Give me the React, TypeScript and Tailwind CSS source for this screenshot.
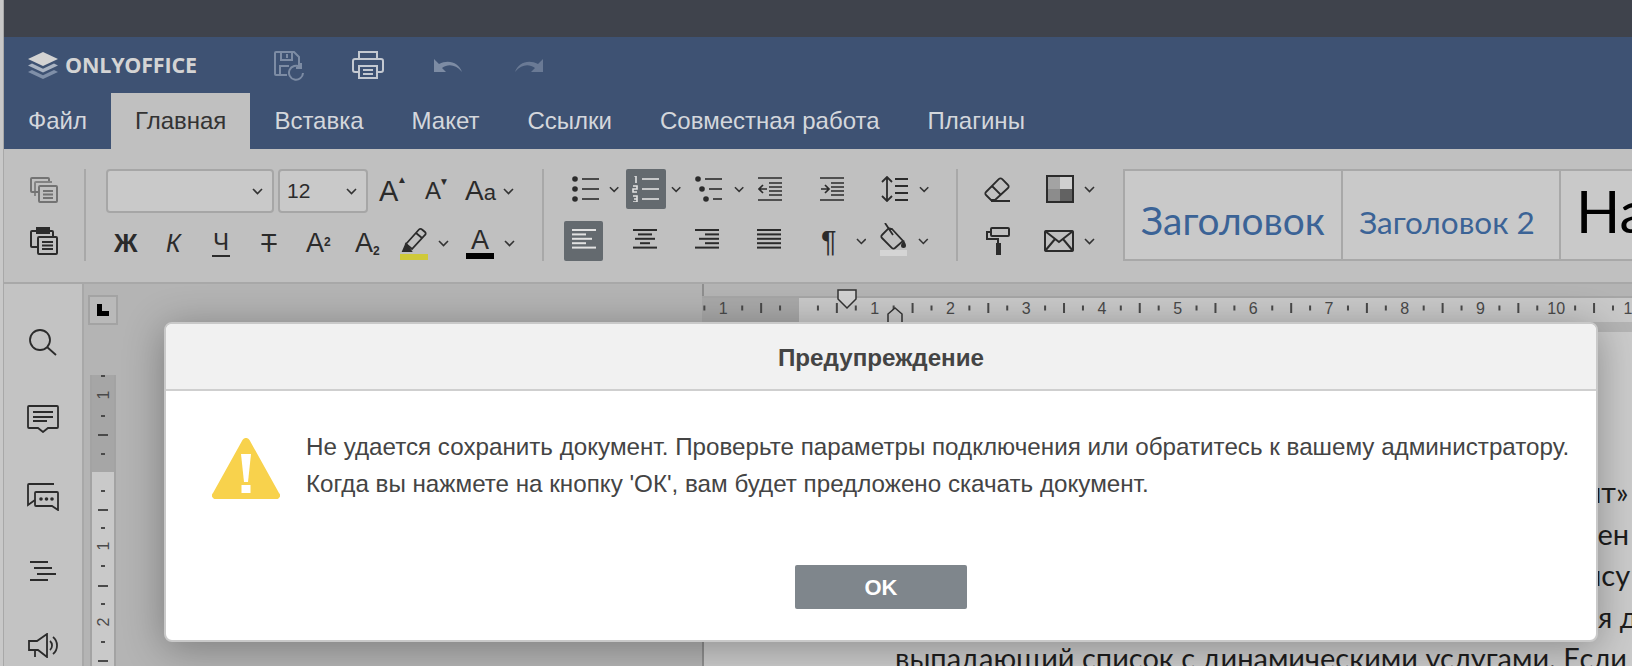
import { FC, ReactNode } from 'react';

const ink = '#2b2b2b';

const Chevron: FC<{ className?: string }> = ({ className }) => (
  <svg className={className} width="11" height="7" viewBox="0 0 11 7" fill="none" stroke="#333" strokeWidth="1.6">
    <path d="M1 1l4.5 4.5L10 1" />
  </svg>
);

const Logo = () => (
  <svg width="30" height="27" viewBox="0 0 30 27">
    <path d="M15 0l15 7-15 7L0 7z" fill="#d3d3d3" />
    <path d="M0 13.5l4-2 11 5.2 11-5.2 4 2-15 7z" fill="#aab4c3" />
    <path d="M0 20l4-2 11 5.2L26 18l4 2-15 7z" fill="#7f8fa8" />
  </svg>
);

const SaveIcon = () => (
  <svg width="31" height="30" viewBox="0 0 31 30" fill="none" stroke="#7d8ca4" strokeWidth="2">
    <path d="M13 24H2a1 1 0 0 1-1-1V2a1 1 0 0 1 1-1h18l5 5v9" />
    <path d="M7 1v8h11V1M13 3v4M6 24v-9h9" />
    <path d="M29 22a7 7 0 1 1-3-6" />
    <path d="M27 12v5h-5" />
  </svg>
);

const PrintIcon = () => (
  <svg width="32" height="28" viewBox="0 0 32 28" fill="none" stroke="#c4c9d1" strokeWidth="2">
    <path d="M7 8V1h18v7" />
    <path d="M7 21H3a2 2 0 0 1-2-2V10a2 2 0 0 1 2-2h26a2 2 0 0 1 2 2v9a2 2 0 0 1-2 2h-4" />
    <path d="M7 15h18v12H7zM11 19h10M11 23h10" />
  </svg>
);

const UndoIcon: FC<{ flip?: boolean }> = ({ flip }) => (
  <svg className={flip ? '-scale-x-100' : ''} width="29" height="15" viewBox="0 0 29 15" fill="#7d8ca4">
    <path d="M0 1v13h12L8 10c6-4 13-4 20 4-3-9-13-13-23-8z" />
  </svg>
);

const CopyIcon = () => (
  <svg width="28" height="26" viewBox="0 0 28 26" fill="none" stroke="#737373" strokeWidth="2">
    <path d="M9 15H2a1 1 0 0 1-1-1V2a1 1 0 0 1 1-1h16a1 1 0 0 1 1 1v2" />
    <path d="M5 19V6a1 1 0 0 1 1-1h16" strokeOpacity="0.8" />
    <rect x="9" y="9" width="18" height="16" rx="1" />
    <path d="M13 14h10M13 17.5h10M13 21h10" />
  </svg>
);

const PasteIcon = () => (
  <svg width="28" height="28" viewBox="0 0 28 28" fill="none" stroke={ink} strokeWidth="2">
    <path d="M7 20H2a1 1 0 0 1-1-1V5a1 1 0 0 1 1-1h20a1 1 0 0 1 1 1v5" />
    <rect x="7" y="1" width="12" height="5" fill={ink} />
    <rect x="8" y="10" width="19" height="17" rx="1" />
    <path d="M12 15h11M12 18.500h11M12 22h11" />
  </svg>
);

const PencilIcon = () => (
  <svg width="28" height="33" viewBox="0 0 28 33" fill="none" stroke={ink} strokeWidth="1.8">
    <path d="M6 17L19 2.500a2 2 0 0 1 3 0l3 2.500a2 2 0 0 1 0 3L12 22z" />
    <path d="M16 6l6 5" />
    <path d="M6 17l-3 7h8z" fill={ink} />
    <rect x="0" y="27" width="28" height="6" fill="#cfc93a" stroke="none" />
  </svg>
);

// bullet, numbered and multilevel lists share the same three rows
const ListIcon: FC<{ x?: number[]; color?: string; numbers?: boolean }> = ({ x = [3, 3, 3], color = ink, numbers }) => (
  <svg width="28" height="26" viewBox="0 0 28 26" stroke={color} strokeWidth="1.6">
    {[3, 13, 23].map((y, i) => (
      <g key={y}>
        {numbers ? (
          <path d={['M2 0l2-1v8', 'M1 10h4v3H1v3h4', 'M1 20h4v6H1M2 23h3'][i]} fill="none" />
        ) : (
          <circle cx={x[i]} cy={y} r="2.800" fill={color} stroke="none" />
        )}
        <path d={`M${x[i] + 7} ${y}h${24 - x[i] - 7 + 3}`} />
      </g>
    ))}
  </svg>
);

const AlignIcon: FC<{ rows: [number, number][]; color?: string }> = ({ rows, color = ink }) => (
  <svg width="24" height="24" viewBox="0 0 24 24" stroke={color} strokeWidth="2">
    {rows.map(([a, b], i) => (
      <path key={i} d={`M${a} ${1 + i * 4.400}H${b}`} />
    ))}
  </svg>
);

const IndentIcon: FC<{ out?: boolean }> = ({ out }) => (
  <svg width="24" height="24" viewBox="0 0 24 24" fill="none" stroke={ink} strokeWidth="1.700">
    <path d="M0 1h24M0 23h24M11 6h13M11 10h13M11 14h13M11 18h13" />
    {out ? <path d="M9 12H1M5 8l-4 4 4 4" /> : <path d="M1 12h8M5 8l4 4-4 4" />}
  </svg>
);

const LineSpacingIcon = () => (
  <svg width="27" height="26" viewBox="0 0 27 26" fill="none" stroke={ink} strokeWidth="1.800">
    <path d="M6 1v24M1 6l5-5 5 5M1 20l5 5 5-5M14 3h13M14 10h13M14 17h13M14 24h13" />
  </svg>
);

const FillIcon = () => (
  <svg width="27" height="33" viewBox="0 0 27 33" fill="none" stroke={ink} strokeWidth="1.800">
    <path d="M12 6l11 12-8 7a2 2 0 0 1-3 0L2 15a2 2 0 0 1 0-3l6-6a2 2 0 0 1 3 0zM5 0l8 12" />
    <path d="M24 17c-2 3-3 4-3 5.500a2.500 2.500 0 0 0 5 0c0-1.500-1-2.500-2-5.500z" fill={ink} stroke="none" />
    <rect x="0" y="27" width="27" height="6" fill="#d5d5d5" stroke="none" />
  </svg>
);

const EraserIcon = () => (
  <svg width="26" height="25" viewBox="0 0 26 25" fill="none" stroke={ink} strokeWidth="1.800">
    <path d="M2 15L15 2a2 2 0 0 1 3 0l6 6a2 2 0 0 1 0 3L11 23H7l-5-5a2 2 0 0 1 0-3zM8 9l9 9M7 24h19" />
  </svg>
);

const SchemeIcon = () => (
  <svg width="28" height="28" viewBox="0 0 28 28">
    <rect x="1" y="1" width="13" height="13" fill="#a3a3a3" />
    <rect x="14" y="1" width="13" height="13" fill="#d0d0d0" />
    <rect x="1" y="14" width="13" height="13" fill="#8c8c8c" />
    <rect x="14" y="14" width="13" height="13" fill="#626262" />
    <rect x="1" y="1" width="26" height="26" fill="none" stroke={ink} strokeWidth="2" />
  </svg>
);

const RollerIcon = () => (
  <svg width="24" height="28" viewBox="0 0 24 28" fill="none" stroke={ink} strokeWidth="2">
    <rect x="5" y="1" width="18" height="8" rx="1" />
    <path d="M5 5H1v7h11v4" />
    <rect x="10" y="16" width="5" height="12" fill={ink} stroke="none" />
  </svg>
);

const MailIcon = () => (
  <svg width="30" height="22" viewBox="0 0 30 22" fill="none" stroke={ink} strokeWidth="2">
    <rect x="1" y="1" width="28" height="20" rx="1" />
    <path d="M1 1l14 11L29 1M1 21l10-12M29 21L19 9" />
  </svg>
);

const SearchIcon = () => (
  <svg width="28" height="27" viewBox="0 0 28 27" fill="none" stroke={ink} strokeWidth="1.800">
    <circle cx="11" cy="11" r="10" />
    <path d="M18 18l9 8" />
  </svg>
);

const CommentIcon = () => (
  <svg width="32" height="28" viewBox="0 0 32 28" fill="none" stroke={ink} strokeWidth="1.800">
    <path d="M2 1h28a1 1 0 0 1 1 1v20a1 1 0 0 1-1 1H21l-5 4-5-4H2a1 1 0 0 1-1-1V2a1 1 0 0 1 1-1z" />
    <path d="M6 7h20M6 12h20M6 16h14" />
  </svg>
);

const ChatIcon = () => (
  <svg width="32" height="28" viewBox="0 0 32 28" fill="none" stroke={ink} strokeWidth="1.800">
    <path d="M27 1H2a1 1 0 0 0-1 1v20l7-5" />
    <path d="M9 9h21a1 1 0 0 1 1 1v17l-6-4H9a1 1 0 0 1-1-1V10a1 1 0 0 1 1-1z" />
    <circle cx="14" cy="16" r="1.800" fill={ink} stroke="none" />
    <circle cx="19.500" cy="16" r="1.800" fill={ink} stroke="none" />
    <circle cx="25" cy="16" r="1.800" fill={ink} stroke="none" />
  </svg>
);

const HeadingsIcon = () => (
  <svg width="26" height="20" viewBox="0 0 26 20" stroke={ink} strokeWidth="1.800">
    <path d="M0 1h18M4 7h18M7 13h19M0 19h18" />
  </svg>
);

const SpeakerIcon = () => (
  <svg width="30" height="25" viewBox="0 0 30 25" fill="none" stroke={ink} strokeWidth="1.800">
    <path d="M1 8h8l10-7v23l-9-7H1zM7 17v7" />
    <path d="M22 8a6 6 0 0 1 0 9M25 4a11 11 0 0 1 0 17" />
  </svg>
);

const WarningIcon = () => (
  <svg width="68" height="61" viewBox="0 0 68 61">
    <path d="M30.500 2a4 4 0 0 1 7 0l29.500 53a3.500 3.500 0 0 1-3 6H4a3.500 3.500 0 0 1-3-6z" fill="#f8d24c" />
    <path d="M29 16h10l-3 28h-4z" fill="#fff" />
    <rect x="29.500" y="47" width="9" height="8" fill="#fff" />
  </svg>
);

const Combo: FC<{ width: string; children?: ReactNode }> = ({ width, children }) => (
  <div className={`flex h-[44px] items-center justify-between rounded-[4px] border-2 border-[#a6a6a6] bg-[#c9c9c9] pl-[7px] pr-[9px] text-[21px] text-[#2b2b2b] ${width}`}>
    <span>{children}</span>
    <Chevron />
  </div>
);

const Active: FC<{ children: ReactNode }> = ({ children }) => (
  <div className="flex h-[40px] w-[40px] items-center justify-center rounded-[2px] bg-[#646a6f]">{children}</div>
);

const HorizontalRuler = () => {
  const ticks = Array.from({ length: 50 }, (_, i) => i - 5);
  return (
    <svg className="overflow-visible" width="930" height="26" viewBox="0 0 930 26">
      <rect x="0" y="0" width="930" height="26" fill="#c9c9c9" />
      <rect x="0" y="0" width="97" height="26" fill="#a9a9a9" />
      <rect x="0" y="0" width="930" height="2" fill="#a6a6a6" />
      {ticks.map((n) => {
        const x = 97 + n * 18.93;
        if (n === 0) return null;
        if (n % 4 === 0) {
          return (
            <text key={n} x={x} y="18" textAnchor="middle" fontSize="16" fill="#4a4a4a" fontFamily="Liberation Sans, sans-serif">
              {Math.abs(n / 4)}
            </text>
          );
        }
        const h = n % 2 === 0 ? 10 : 5;
        return <rect key={n} x={x - 1} y={12 - h / 2} width="2" height={h} fill="#4a4a4a" />;
      })}
      <path d="M136 -6h18v9l-9 9-9-9z" fill="#d2d2d2" stroke="#333" strokeWidth="1.500" />
      <path d="M186 26v-8l7-6 7 6v8" fill="#c9c9c9" stroke="#333" strokeWidth="1.500" />
    </svg>
  );
};

const VerticalRuler = () => {
  const labels: [number, string][] = [[20, '1'], [171, '1'], [247, '2']];
  const small = [-0, 40, 78, 115, 152, 190, 228, 266];
  const tall = [59, 134, 210, 285];
  return (
    <svg width="26" height="291" viewBox="0 0 26 291">
      <rect x="0" y="0" width="26" height="291" fill="#c9c9c9" />
      <rect x="0" y="0" width="26" height="97" fill="#a6a6a6" />
      <path d="M1 0v291M25 0v291" stroke="#a3a3a3" strokeWidth="2" />
      {small.map((y) => (
        <rect key={y} x="11" y={y} width="4" height="2" fill="#4a4a4a" />
      ))}
      {tall.map((y) => (
        <rect key={y} x="8" y={y} width="10" height="2" fill="#4a4a4a" />
      ))}
      {labels.map(([y, t]) => (
        <text
          key={y}
          transform={`translate(19 ${y}) rotate(-90)`}
          textAnchor="middle"
          fontSize="16"
          fill="#4a4a4a"
          fontFamily="Liberation Sans, sans-serif"
        >
          {t}
        </text>
      ))}
    </svg>
  );
};

export default function App() {
  const tabs = ['Файл', 'Главная', 'Вставка', 'Макет', 'Ссылки', 'Совместная работа', 'Плагины'];

  return (
    <div className="relative flex h-[666px] w-[1632px] overflow-hidden bg-[#b4b4b4] font-['Liberation_Sans',sans-serif]">
      <div className="h-full w-[4px] shrink-0 border-r border-[#a8a8a8] bg-[#c8c8c8]" />

      <div className="flex min-w-0 flex-1 flex-col">
        <div className="h-[37px] shrink-0 bg-[#3f434c]" />

        <div className="h-[112px] shrink-0 bg-[#3e5273]">
          <div className="flex h-[56px] items-center">
            <div className="ml-[24px] flex items-center">
              <Logo />
              <span className="ml-[7px] font-['Open_Sans',sans-serif] text-[21.500px] font-bold tracking-[-0.2px] text-[#d4d4d4]">ONLYOFFICE</span>
            </div>
            <div className="ml-[77px] mt-[2px]"><SaveIcon /></div>
            <div className="ml-[47px]"><PrintIcon /></div>
            <div className="ml-[50px]"><UndoIcon /></div>
            <div className="ml-[51px] opacity-70"><UndoIcon flip /></div>
          </div>
          <div className="flex h-[56px] items-stretch text-[24px]">
            {tabs.map((tab) => (
              <div
                key={tab}
                className={
                  tab === 'Главная'
                    ? 'flex items-center bg-[#c0c0c0] px-[24px] text-[#333]'
                    : 'flex items-center px-[24px] text-[#d4d7dc]'
                }
              >
                {tab}
              </div>
            ))}
          </div>
        </div>

        <div className="flex h-[135px] shrink-0 items-start border-b-2 border-[#a8a8a8] bg-[#c0c0c0] pt-[20px]">
          <div className="ml-[26px] flex h-[92px] w-[28px] flex-col justify-between pb-[6px] pt-[8px]">
            <CopyIcon />
            <PasteIcon />
          </div>
          <div className="ml-[26px] h-[92px] w-[2px] bg-[#a8a8a8]" />

          <div className="ml-[20px] flex h-[92px] w-[409px] flex-col justify-between text-[#2b2b2b]">
            <div className="flex h-[44px] items-center">
              <Combo width="w-[168px]" />
              <div className="ml-[4px]"><Combo width="w-[90px]">12</Combo></div>
              <span className="relative ml-[11px] w-[23px] text-[29px] leading-none">
                A<span className="absolute -top-[2px] left-[18px] text-[10px]">▲</span>
              </span>
              <span className="relative ml-[23px] w-[21px] text-[24px] leading-none">
                A<span className="absolute -top-[2px] left-[14px] text-[10px]">▼</span>
              </span>
              <span className="ml-[19px] w-[29px] text-[28px] leading-none">A<span className="text-[22px]">a</span></span>
              <Chevron className="ml-[9px]" />
            </div>
            <div className="flex h-[36px] items-center">
              <span className="ml-[8px] w-[24px] text-[26px] font-bold leading-none">Ж</span>
              <span className="ml-[28px] w-[14px] text-[25px] italic leading-none">К</span>
              <span className="ml-[32px] w-[18px] border-b-2 border-[#2b2b2b] text-center text-[24px] leading-[26px]">Ч</span>
              <span className="ml-[30px] w-[18px] text-center text-[25px] leading-none line-through">Т</span>
              <span className="ml-[28px] w-[25px] text-[27px] leading-none">A<sup className="text-[12px] font-bold">2</sup></span>
              <span className="ml-[24px] w-[25px] text-[27px] leading-none">A<sub className="text-[12px] font-bold">2</sub></span>
              <div className="ml-[20px]"><PencilIcon /></div>
              <Chevron className="ml-[10px]" />
              <div className="ml-[17px] flex w-[28px] flex-col items-center text-[27px] leading-[26px]">
                A
                <div className="h-[6px] w-full bg-black" />
              </div>
              <Chevron className="ml-[10px]" />
            </div>
          </div>
          <div className="ml-[27px] h-[92px] w-[2px] bg-[#a8a8a8]" />

          <div className="ml-[20px] flex h-[92px] w-[365px] flex-col justify-between">
            <div className="flex h-[40px] items-center">
              <div className="ml-[8px] -mr-[4px]"><ListIcon x={[3, 3, 3]} /></div>
              <Chevron className="ml-[13px]" />
              <div className="ml-[7px]"><Active><ListIcon color="#e2e2e2" numbers /></Active></div>
              <Chevron className="ml-[5px]" />
              <div className="ml-[13px]"><ListIcon x={[3, 7, 11]} /></div>
              <Chevron className="ml-[11px]" />
              <div className="ml-[14px]"><IndentIcon out /></div>
              <div className="ml-[38px]"><IndentIcon /></div>
              <div className="ml-[37px]"><LineSpacingIcon /></div>
              <Chevron className="ml-[11px]" />
            </div>
            <div className="flex h-[40px] items-center">
              <Active>
                <AlignIcon color="#e2e2e2" rows={[[0, 24], [0, 14], [0, 20], [0, 14], [0, 24]]} />
              </Active>
              <div className="ml-[30px]"><AlignIcon rows={[[0, 24], [5, 19], [2, 22], [7, 17], [0, 24]]} /></div>
              <div className="ml-[38px]"><AlignIcon rows={[[0, 24], [10, 24], [4, 24], [10, 24], [0, 24]]} /></div>
              <div className="ml-[38px]"><AlignIcon rows={[[0, 24], [0, 24], [0, 24], [0, 24], [0, 24]]} /></div>
              <span className="ml-[40px] w-[18px] text-[29px] leading-none text-[#2b2b2b]">¶</span>
              <Chevron className="ml-[17px]" />
              <div className="-mt-[4px] ml-[14px]"><FillIcon /></div>
              <Chevron className="ml-[11px]" />
            </div>
          </div>
          <div className="ml-[27px] h-[92px] w-[2px] bg-[#a8a8a8]" />

          <div className="ml-[26px] flex h-[92px] w-[111px] flex-col justify-between py-[6px]">
            <div className="flex items-center">
              <EraserIcon />
              <div className="ml-[36px]"><SchemeIcon /></div>
              <Chevron className="ml-[10px]" />
            </div>
            <div className="flex items-center">
              <div className="ml-[2px]"><RollerIcon /></div>
              <div className="ml-[34px]"><MailIcon /></div>
              <Chevron className="ml-[10px]" />
            </div>
          </div>

          <div className="ml-[28px] flex h-[92px] min-w-0 flex-1 overflow-hidden border-y-2 border-l-2 border-[#a8a8a8] bg-[#c9c9c9] font-['Lato',sans-serif]">
            <div className="flex w-[218px] shrink-0 items-center justify-center border-r-2 border-[#a8a8a8] pt-[10px] text-[38.800px] text-[#3b6396]">Заголовок</div>
            <div className="flex w-[218px] shrink-0 items-center justify-center border-r-2 border-[#a8a8a8] pr-[8px] pt-[16px] text-[31.500px] text-[#3b6396]">Заголовок 2</div>
            <div className="flex shrink-0 items-center whitespace-nowrap pb-[10px] pl-[15px] text-[58px] text-black">На</div>
          </div>
        </div>

        <div className="flex min-h-0 flex-1">
          <div className="flex w-[80px] shrink-0 flex-col items-center border-r-2 border-[#a8a8a8] bg-[#c3c3c3] pt-[45px]">
            <div className="flex h-[27px] items-center"><SearchIcon /></div>
            <div className="mt-[49px]"><CommentIcon /></div>
            <div className="mt-[50px]"><ChatIcon /></div>
            <div className="mt-[50px]"><HeadingsIcon /></div>
            <div className="mt-[52px]"><SpeakerIcon /></div>
          </div>

          <div className="w-[618px] shrink-0 pl-[4px] pt-[11px]">
            <div className="flex h-[30px] w-[30px] items-center justify-center border-2 border-[#a3a3a3] bg-[#b9b9b9]">
              <div className="h-[12px] w-[12px] border-b-[5px] border-l-[5px] border-black" />
            </div>
            <div className="ml-[2px] mt-[50px]"><VerticalRuler /></div>
          </div>

          <div className="flex min-w-0 flex-1 flex-col border-l-2 border-[#8f8f8f]">
            <div className="-ml-[2px] mt-[12px] h-[26px] shrink-0"><HorizontalRuler /></div>
            <div className="mt-[10px] flex-1 overflow-hidden whitespace-nowrap bg-[#cbcbcb] pt-[139px] font-['Lato',sans-serif] text-[29px] leading-[41.500px] text-[#1d1d1d]">
              <div className="ml-[881px]">нт»</div>
              <div className="ml-[873px]">мен</div>
              <div className="ml-[881px]">нсу</div>
              <div className="ml-[894px]">я д</div>
              <div className="ml-[191px]">выпадающий список с динамическими услугами. Если</div>
            </div>
          </div>
        </div>
      </div>

      <div className="absolute left-[164px] top-[322px] flex h-[320px] w-[1434px] flex-col overflow-hidden rounded-[8px] border-2 border-[#c9c9c9] bg-white shadow-[0_6px_40px_rgba(0,0,0,0.32)]">
        <div className="flex h-[67px] shrink-0 items-center justify-center border-b-2 border-[#cfcfcf] bg-[#f1f1f1] pt-[3px] text-[24.200px] font-bold text-[#444]">
          Предупреждение
        </div>
        <div className="flex pl-[46px] pt-[37px]">
          <div className="mt-[10px]"><WarningIcon /></div>
          <div className="ml-[26px] text-[24.200px] leading-[37px] text-[#444]">
            <div>Не удается сохранить документ. Проверьте параметры подключения или обратитесь к вашему администратору.</div>
            <div>Когда вы нажмете на кнопку 'ОК', вам будет предложено скачать документ.</div>
          </div>
        </div>
        <button className="mx-auto mb-[31px] mt-auto h-[44px] w-[172px] rounded-[2px] bg-[#7f868c] text-[22px] font-bold text-white">
          OK
        </button>
      </div>
    </div>
  );
}
